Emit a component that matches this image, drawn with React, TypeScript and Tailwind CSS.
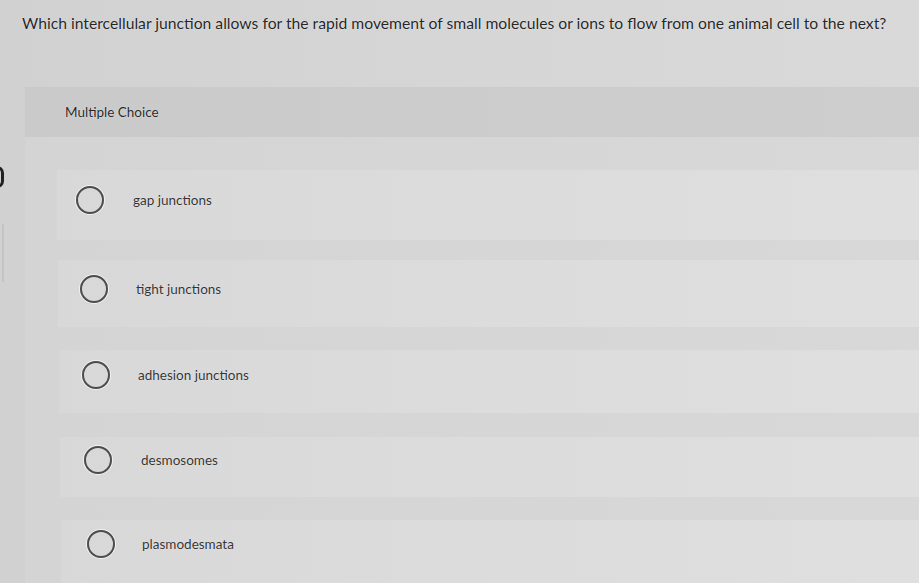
import React from "react";

const options = [
  { label: "gap junctions", row: "mt-[0px] h-[70px] pb-[10px] ml-[0px] pl-[19px] gap-[29px]" },
  { label: "tight junctions", row: "mt-[20px] h-[67px] pb-[9px] ml-[1px] pl-[22px] gap-[28px]" },
  { label: "adhesion junctions", row: "mt-[23px] h-[63px] pb-[13px] ml-[2px] pl-[23px] gap-[28px]" },
  { label: "desmosomes", row: "mt-[24px] h-[60px] pb-[14px] ml-[3px] pl-[24px] gap-[29px]" },
  { label: "plasmodesmata", row: "mt-[23px] h-[63px] pb-[15px] ml-[4px] pl-[26px] gap-[27px]" },
];

export default function App() {
  return (
    <div
      className="w-[919px] h-[583px] overflow-hidden relative bg-gradient-to-r from-[#d1d1d1] via-[#d6d6d6] to-[#d9d9d9] text-[#262626]"
      style={{ fontFamily: "Lato, 'Noto Sans', sans-serif" }}
    >
      <div className="absolute left-[-10px] top-[166px] w-[14px] h-[22px] rounded-full border-[3px] border-[#222]" />
      <div className="absolute left-[2px] top-[224px] w-[2px] h-[58px] bg-[#c4c4c4]" />
      <div className="pt-[13px] pl-[22px] text-[15.7px] leading-[20px] [text-shadow:0_0_1px_#fff]">
        Which intercellular junction allows for the rapid movement of small molecules or ions to flow from one animal cell to the next?
      </div>
      <div className="mt-[54px] ml-[25px]">
        <div className="h-[50px] bg-gradient-to-r from-[#cacaca] to-[#cecece] flex items-center pl-[40px] text-[13.5px] [text-shadow:0_0_1px_#fff]">
          Multiple Choice
        </div>
        <div className="bg-gradient-to-r from-[#d4d4d4] to-[#d8d8d8] pt-[33px] pl-[32px] flex flex-col h-[446px]">
          {options.map((o, i) => (
            <div
              key={i}
              className={`shrink-0 bg-gradient-to-r from-[#d8d8d8] via-[#dcdcdc] to-[#dfdfdf] flex items-center ${o.row}`}
            >
              <div className="w-[28px] h-[28px] shrink-0 rounded-full border-2 border-[#4d4d4d] shadow-[0_0_0_1px_#f2f2f2]" />
              <span className="text-[13.5px] text-[#333] [text-shadow:0_0_1px_#fff]">{o.label}</span>
            </div>
          ))}
        </div>
      </div>
    </div>
  );
}
